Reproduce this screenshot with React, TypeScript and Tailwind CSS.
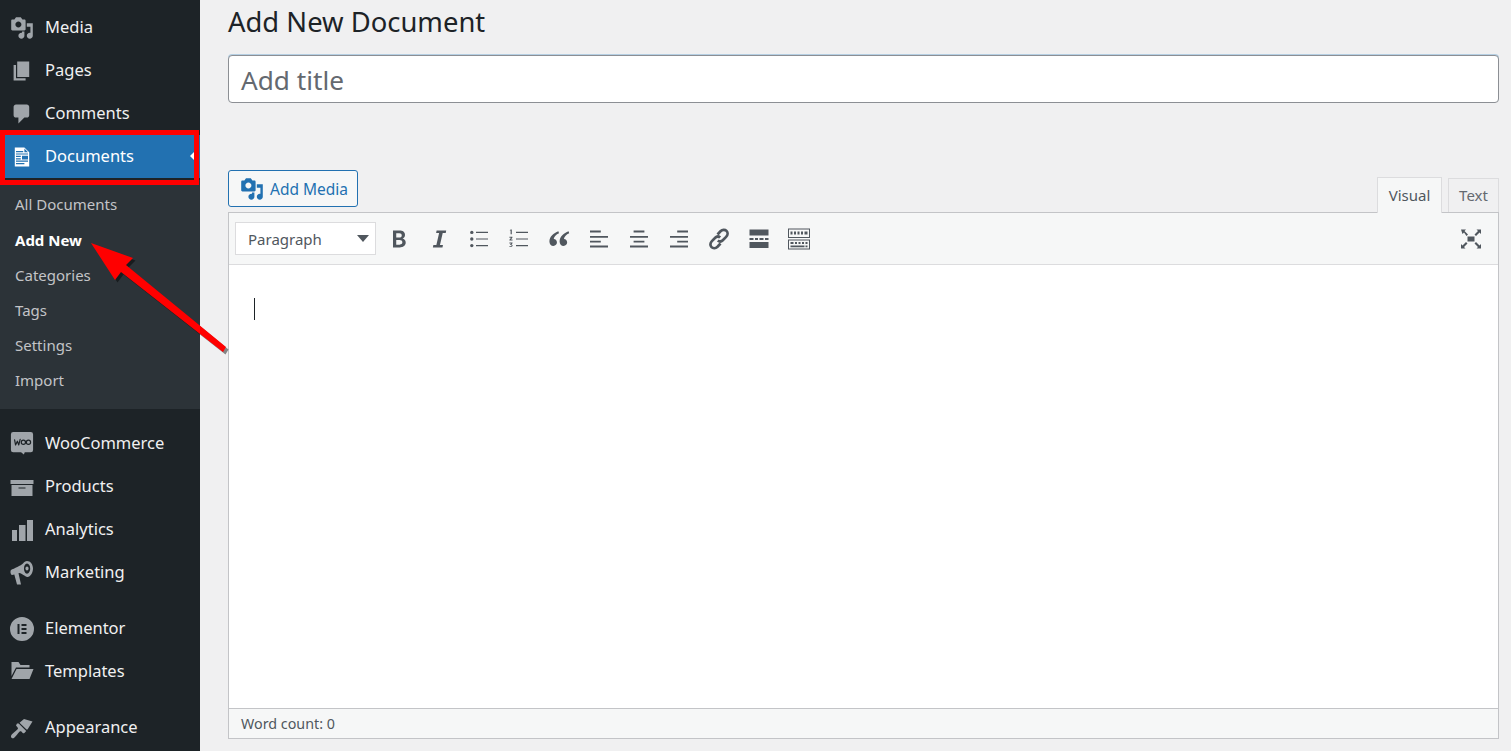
import React from "react";

const FONT = "[font-family:'Noto_Sans','Open_Sans',sans-serif]";

type IconProps = { className?: string };

const MediaIcon = ({ className }: IconProps) => (
  <svg viewBox="0 0 20 20" className={className} fill="currentColor">
    <path d="M13 11V4c0-.55-.45-1-1-1h-1.670L9 1H5L3.670 3H2c-.55 0-1 .45-1 1v7c0 .55.45 1 1 1h10c.55 0 1-.45 1-1zM7 4.500c1.380 0 2.500 1.120 2.500 2.500S8.380 9.500 7 9.500 4.500 8.380 4.500 7 5.620 4.500 7 4.500zM14 6h5v10.500c0 1.380-1.120 2.500-2.500 2.500S14 17.880 14 16.500s1.120-2.500 2.500-2.500c.17 0 .34.02.5.05V9h-3V6zm-4 8.050V13h2v3.500c0 1.380-1.120 2.500-2.500 2.500S7 17.880 7 16.500 8.120 14 9.500 14c.17 0 .34.02.5.05z" fillRule="evenodd" />
  </svg>
);
const PagesIcon = ({ className }: IconProps) => (
  <svg viewBox="0 0 20 20" className={className} fill="currentColor">
    <path d="M6 15V2h10v13H6zm-1 1h8v2H3V5h2v11z" />
  </svg>
);
const CommentsIcon = ({ className }: IconProps) => (
  <svg viewBox="0 0 20 20" className={className} fill="currentColor">
    <path d="M5 2h9c1.100 0 2 .9 2 2v7c0 1.100-.9 2-2 2h-2l-5 5v-5H5c-1.100 0-2-.9-2-2V4c0-1.100.9-2 2-2z" />
  </svg>
);
const DocumentIcon = ({ className }: IconProps) => (
  <svg viewBox="0 0 20 20" className={className} fill="currentColor">
    <path d="M12 2l4 4v12H4V2h8zM5 5v1h6V5H5zm7 1h3l-3-3v3zM15 8V7H5v1h10zM5 9v1h4V9H5zm10 3V9h-5v3h5zM5 11v1h4v-1H5zm10 3v-1H5v1h10zm-3 2v-1H5v1h7z" fillRule="evenodd" />
  </svg>
);
const WooIcon = ({ className }: IconProps) => (
  <svg viewBox="0 0 24 26" className={className}>
    <path fill="currentColor" d="M2.500 0h19A2.500 2.500 0 0 1 24 2.500v17a2.500 2.500 0 0 1-2.500 2.500H15l-1 2.500-3-2.500H2.500A2.500 2.500 0 0 1 0 19.500v-17A2.500 2.500 0 0 1 2.500 0z" />
    <path fill="none" stroke="#1d2327" strokeWidth="1.300" strokeLinecap="round" strokeLinejoin="round" d="M4 8.500l1 5.500 2-4 1.500 4 1.500-6" />
    <circle cx="13.500" cy="11" r="2.300" fill="none" stroke="#1d2327" strokeWidth="1.300" />
    <circle cx="19" cy="11" r="2.300" fill="none" stroke="#1d2327" strokeWidth="1.300" />
  </svg>
);
const ProductsIcon = ({ className }: IconProps) => (
  <svg viewBox="0 0 24 24" className={className} fill="currentColor">
    <path d="M.5 5h23v4H.5zM1.500 10h21v11h-21zM8.500 12.500v1h7v-1z" fillRule="evenodd" />
  </svg>
);
const AnalyticsIcon = ({ className }: IconProps) => (
  <svg viewBox="0 0 24 24" className={className} fill="currentColor">
    <path d="M2 12h5v11H2zM9 7h6.500v16H9zM17 2h6v21h-6z" />
  </svg>
);
const MarketingIcon = ({ className }: IconProps) => (
  <svg viewBox="0 0 24 24" className={className} fill="currentColor">
    <path fillRule="evenodd" d="M17 0c3.500 0 6 3.500 6 7.500S20.500 16 17.500 16c-1.500 0-4-2.500-8-4l-1 .3L11 23.500H7L4.300 13.500l-2.300.5C.5 13.500 0 10 1 9c3-1.500 10-4.500 12-6.500C14 1 15.500 0 17 0zm0 2.500c-1.800 0-3 2.400-3 5s1.200 5.200 3 5.200 3.200-2.600 3.200-5.200S18.800 2.500 17 2.500zm0 3c1 0 1.600.9 1.600 2s-.6 1.900-1.600 1.900-1.600-.9-1.600-1.900.6-2 1.600-2z" />
  </svg>
);
const ElementorIcon = ({ className }: IconProps) => (
  <svg viewBox="0 0 24 24" className={className} fill="currentColor">
    <path fillRule="evenodd" d="M12 0a12 12 0 1 1 0 24a12 12 0 0 1 0-24zM7.500 7v10h2V7zm4 0v2h5V7zm0 4v2h5v-2zm0 4v2h5v-2z" />
  </svg>
);
const FolderIcon = ({ className }: IconProps) => (
  <svg viewBox="0 0 24 24" className={className} fill="currentColor">
    <path d="M1.500 2h7l2 3h9v2.500H6L1.500 16V2zM6.500 9H23.500l-4 10H1.500z" />
  </svg>
);
const BrushIcon = ({ className }: IconProps) => (
  <svg viewBox="0 0 24 24" className={className} fill="currentColor">
    <path d="M14 3l8.500 2.500-5 8-1 0L9.500 6.800zM8.700 7.600l7.500 7.500-1.800 1.800c-.5.5-1.200.5-1.700 0l-1.300-1.300c-.5-.5-1.200-.5-1.700 0-2 2-3.500 4.500-5.500 6.200-1.300 1.100-3 .4-3.200-1-.1-1 .4-1.800 1-2.500 1.700-2 3.900-3.200 5.600-5 .5-.5.5-1.200 0-1.700L6 9.400l1-1.800z" />
  </svg>
);

const BoldIcon = () => (
  <svg viewBox="0 0 20 20" className="w-6 h-6" fill="currentColor">
    <path fillRule="evenodd" d="M5 3h5.500C13 3 15 4.200 15 6.600c0 1.400-.8 2.500-2 3 1.500.4 2.600 1.600 2.600 3.400 0 2.700-2.300 4-5 4H5V3zm2.700 2.300v3.400h2.600c1.200 0 2-.6 2-1.700s-.8-1.700-2-1.700H7.700zm0 5.600v3.800h2.800c1.400 0 2.300-.7 2.300-1.900s-.9-1.900-2.300-1.900H7.700z" />
  </svg>
);
const ItalicIcon = () => (
  <svg viewBox="0 0 20 20" className="w-6 h-6" fill="currentColor">
    <path d="M8 3h8l-.4 2h-2.500l-2.300 10h2.500l-.4 2h-8l.4-2h2.500l2.300-10H7.600z" />
  </svg>
);
const BulletIcon = () => (
  <svg viewBox="0 0 20 20" className="w-6 h-6" fill="currentColor">
    <circle cx="4" cy="4.500" r="1.400" /><circle cx="4" cy="10" r="1.400" /><circle cx="4" cy="15.500" r="1.400" />
    <path d="M7.500 4h10v1h-10zM7.500 9.500h10v1h-10zM7.500 15h10v1h-10z" />
  </svg>
);
const NumberIcon = () => (
  <svg viewBox="0 0 20 20" className="w-6 h-6" fill="currentColor">
    <path d="M7.500 4h10v1h-10zM7.500 9.500h10v1h-10zM7.500 15h10v1h-10z" />
    <path d="M3 2h1v4H3V3H2.200zM2 8.200h2.500v.7L3.200 10.500h1.400v.7H2v-.6l1.400-1.700H2zM2 13h2.600v.6l-.9.9c.6.1 1 .4 1 1 0 .7-.6 1.200-1.500 1.200H2v-.7h1.100c.5 0 .7-.2.7-.5s-.3-.4-.7-.4h-.5v-.6l.9-.8H2z" />
  </svg>
);
const QuoteIcon = () => (
  <svg viewBox="0 0 20 20" className="w-6 h-6" fill="currentColor">
    <path d="M9.500 3.500C5.500 5 2 8 2 12c0 2.200 1.400 3.800 3.300 3.800 1.800 0 3-1.300 3-3 0-1.600-1.100-2.800-2.700-2.900.3-1.800 2-3.500 4.400-4.600zM18 3.500c-4 1.500-7.500 4.500-7.500 8.500 0 2.200 1.400 3.800 3.300 3.800 1.800 0 3-1.300 3-3 0-1.600-1.100-2.800-2.700-2.900.3-1.800 2-3.500 4.400-4.600z" />
  </svg>
);
const AlignLeft = () => (
  <svg viewBox="0 0 20 20" className="w-6 h-6" fill="currentColor">
    <path d="M2.500 3h9v1.500h-9zM2.500 7.500h15V9h-15zM2.500 11.500h9V13h-9zM2.500 15.500h15V17h-15z" />
  </svg>
);
const AlignCenter = () => (
  <svg viewBox="0 0 20 20" className="w-6 h-6" fill="currentColor">
    <path d="M5.500 3h9v1.500h-9zM2.500 7.500h15V9h-15zM5.500 11.500h9V13h-9zM2.500 15.500h15V17h-15z" />
  </svg>
);
const AlignRight = () => (
  <svg viewBox="0 0 20 20" className="w-6 h-6" fill="currentColor">
    <path d="M8.500 3h9v1.500h-9zM2.500 7.500h15V9h-15zM8.500 11.500h9V13h-9zM2.500 15.500h15V17h-15z" />
  </svg>
);
const LinkIcon = () => (
  <svg viewBox="0 0 24 24" className="w-6 h-6" fill="none" stroke="currentColor" strokeWidth="2.700">
    <path d="M10.500 7.500l3-3.200c1.900-1.900 4.500-1.900 6-.4s1.500 4.100-.4 6l-3.300 3.300c-1.500 1.500-3.500 1.500-5 .2" />
    <path d="M13.500 16.500l-3 3.200c-1.900 1.900-4.500 1.900-6 .4s-1.500-4.100.4-6l3.300-3.300c1.500-1.500 3.500-1.500 5-.2" />
  </svg>
);
const MoreIcon = () => (
  <svg viewBox="0 0 24 24" className="w-6 h-6" fill="currentColor">
    <path d="M2.500 2.500h19v6h-19zM2.500 15h19v6h-19zM2.500 11h4v2h-4zM8 11h3v2H8zM12.500 11h4v2h-4zM18 11h3.500v2H18z" />
  </svg>
);
const KitchenIcon = () => (
  <svg viewBox="0 0 24 24" className="w-6 h-6" fill="currentColor">
    <path fillRule="evenodd" d="M1 1.500h22V11H1zM2 2.500V10h20V2.500zM1 12.500h22v10H1zM2 13.500v8h20v-8z" />
    <path d="M3.500 4.500h2v3h-2zM7 4.500h2v3H7zM10.500 4.500h2v3h-2zM14 4.500h2v3h-2zM17.500 4.500h3v3h-3zM3.500 15h3v2h-3zM8 15h2v2H8zM11.500 15h2v2h-2zM15 15h2v2h-2zM18.500 15h2v2h-2zM3.500 18.500h14v1.800h-14zM18.500 18.500h2v1.800h-2z" />
  </svg>
);
const FullscreenIcon = () => (
  <svg viewBox="0 0 24 24" className="w-6 h-6" fill="currentColor">
    <path d="M8.500 9.500h7v5h-7zM2 2.500h5L5.500 4l3.500 3.500-1.500 1.500L5 5.500 3.500 7zM22 2.500v4.500l-1.500-1.500-3.500 3.500-1.500-1.500L19 4l-1.500-1.500zM2 21.500V17l1.500 1.500L7 15l1.500 1.500L5 20l1.500 1.500zM22 21.500h-4.500L19 20l-3.500-3.500L17 15l3.500 3.500L22 17z" />
  </svg>
);

const Row = ({ icon: Icon, label }: { icon: React.FC<IconProps>; label: string }) => (
  <div className="h-[43px] flex items-center text-[#f0f0f1]">
    <span className="w-[45px] pr-[1px] flex justify-center shrink-0 text-[#a0a5aa]">
      <Icon className="w-6 h-6" />
    </span>
    <span className="text-[16.500px] leading-none">{label}</span>
  </div>
);

const Sub = ({ label, active }: { label: string; active?: boolean }) => (
  <div className={`h-[35.200px] flex items-center pl-[15px] text-[15px] ${active ? "text-white font-bold" : "text-[#c3c4c7]"}`}>
    {label}
  </div>
);

const tools: React.FC[] = [BoldIcon, ItalicIcon, BulletIcon, NumberIcon, QuoteIcon, AlignLeft, AlignCenter, AlignRight, LinkIcon, MoreIcon, KitchenIcon];

export default function App() {
  return (
    <div className={`relative flex h-[751px] w-[1511px] overflow-hidden bg-[#f0f0f1] ${FONT}`}>
      <aside className="w-[200px] shrink-0 bg-[#1d2327] pt-[6px]">
        <Row icon={MediaIcon} label="Media" />
        <Row icon={PagesIcon} label="Pages" />
        <Row icon={CommentsIcon} label="Comments" />
        <div className="relative h-[43px] bg-[#2271b1] flex items-center text-white">
          <span className="w-[45px] pr-[1px] flex justify-center shrink-0">
            <DocumentIcon className="w-6 h-6" />
          </span>
          <span className="text-[16.500px] leading-none">Documents</span>
          <span className="absolute right-[5px] top-[16px] border-y-[5px] border-r-[5px] border-y-transparent border-r-white" />
        </div>
        <div className="mt-[2px] bg-[#2c3338] pt-[7px] pb-[11px]">
          <Sub label="All Documents" />
          <Sub label="Add New" active />
          <Sub label="Categories" />
          <Sub label="Tags" />
          <Sub label="Settings" />
          <Sub label="Import" />
        </div>
        <div className="mt-[13px]">
          <Row icon={WooIcon} label="WooCommerce" />
          <Row icon={ProductsIcon} label="Products" />
          <Row icon={AnalyticsIcon} label="Analytics" />
          <Row icon={MarketingIcon} label="Marketing" />
        </div>
        <div className="mt-[13px]">
          <Row icon={ElementorIcon} label="Elementor" />
          <Row icon={FolderIcon} label="Templates" />
        </div>
        <div className="mt-[13px]">
          <Row icon={BrushIcon} label="Appearance" />
        </div>
      </aside>

      <main className="flex-1 pl-[28px] pr-[12px] flex flex-col">
        <h1 className="h-[44px] flex items-center text-[27.400px] text-[#1d2327] font-normal leading-none">Add New Document</h1>
        <div className="mt-[11px] h-[48px] rounded-[4px] border border-[#8c8f94] bg-white shadow-[0_-1px_0_#b5cfe3] flex items-center pl-[12px] pt-[4px] text-[26.200px] text-[#646970]">
          Add title
        </div>
        <div className="mt-[67px] h-[43px] flex justify-between items-start">
          <div className="h-[37px] w-[130px] rounded-[3px] border border-[#2271b1] bg-[#f6f7f7] text-[#2271b1] flex items-center pl-[11px] gap-[6px] text-[15.500px]">
            <MediaIcon className="w-6 h-6" />
            <span className="pt-[2px]">Add Media</span>
          </div>
          <div className="flex items-end gap-[6px] h-[43px] pt-[7px]">
            <div className="relative z-10 h-[36px] w-[65px] border border-b-0 border-[#dcdcde] bg-[#f6f7f7] text-[#50575e] text-[15px] flex items-center justify-center">Visual</div>
            <div className="h-[35px] w-[51px] border border-[#dcdcde] bg-[#f0f0f1] text-[#646970] text-[15px] flex items-center justify-center">Text</div>
          </div>
        </div>
        <div className="-mt-px h-[527px] border border-[#c3c4c7] bg-white flex flex-col">
          <div className="h-[52px] shrink-0 bg-[#f6f7f7] border-b border-[#dcdcde] flex items-center pl-[6px] pr-[15px] text-[#50575e]">
            <div className="h-[33px] w-[141px] border border-[#dcdcde] bg-white flex items-center justify-between pl-[12px] pr-[6px] text-[15px] text-[#50575e]">
              <span className="pt-[2px]">Paragraph</span>
              <span className="border-x-[6px] border-t-[7px] border-x-transparent border-t-[#50575e]" />
            </div>
            <div className="ml-[11px] flex gap-[16px]">
              {tools.map((T, i) => (
                <T key={i} />
              ))}
            </div>
            <div className="ml-auto">
              <FullscreenIcon />
            </div>
          </div>
          <div className="flex-1 pl-[25px] pt-[33px]">
            <div className="h-[22px] w-px bg-[#1d2327]" />
          </div>
          <div className="h-[30px] shrink-0 bg-[#f6f7f7] border-t border-[#c3c4c7] flex items-center pl-[12px] text-[14.300px] text-[#50575e]">
            Word count: 0
          </div>
        </div>
      </main>

      <div className="absolute left-0 top-[130px] h-[55px] w-[199px] border-[5px] border-[#ff0000] pointer-events-none" />
      <svg className="absolute left-[85px] top-[235px] pointer-events-none" width="150" height="125" viewBox="0 0 150 125">
        <path d="M6 8L48 23L41 30L141 112L138 117L36 37L30 45Z" fill="#000" opacity="0.45" transform="translate(2.500 2.500)" />
        <path d="M6 8L48 23L41 30L141 112L138 117L36 37L30 45Z" fill="#ff0000" />
      </svg>
    </div>
  );
}
